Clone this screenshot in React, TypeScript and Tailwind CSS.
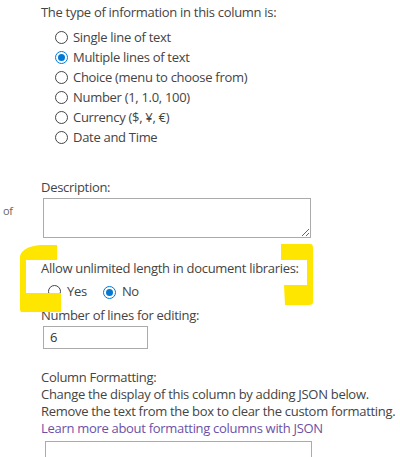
import React from "react";

function Radio({ checked }: { checked?: boolean }) {
  return checked ? (
    <span className="inline-flex h-[13px] w-[13px] shrink-0 items-center justify-center rounded-full border border-[#0078d4] bg-white">
      <span className="h-[7px] w-[7px] rounded-full bg-[#0078d4]" />
    </span>
  ) : (
    <span className="inline-block h-[13px] w-[13px] shrink-0 rounded-full border border-[#444] bg-white" />
  );
}

const types = [
  { label: "Single line of text" },
  { label: "Multiple lines of text", checked: true },
  { label: "Choice (menu to choose from)" },
  { label: "Number (1, 1.0, 100)" },
  { label: "Currency ($, ¥, €)" },
  { label: "Date and Time" },
];

export default function App() {
  return (
    <div
      className="relative h-[457px] w-[400px] overflow-hidden bg-white text-[13px] leading-[17px] tracking-[-0.3px] text-[#444]"
      style={{ fontFamily: "'Open Sans', 'Noto Sans', sans-serif" }}
    >
      <div className="flex flex-col pl-[41px] pt-[4px]">
        <div>The type of information in this column is:</div>
        <div className="mt-[8px] flex flex-col gap-[3px] pl-[14px]">
          {types.map((t) => (
            <label key={t.label} className="flex h-[17px] items-center gap-[5px]">
              <Radio checked={t.checked} />
              <span>{t.label}</span>
            </label>
          ))}
        </div>
      </div>

      <div className="mt-[33px] flex">
        <div className="w-[41px] shrink-0 pl-[3px] pt-[23px] text-[11px] text-[#666]">
          <span className="-ml-[9px] mr-[3px] text-[#0078d4]">e</span>of
        </div>
        <div className="flex flex-col">
          <div>Description:</div>
          <textarea className="mt-[2px] ml-[2px] h-[40px] w-[268px] resize border border-[#ababab] bg-white outline-none" />
          <div className="mt-[22px]">Allow unlimited length in document libraries:</div>
          <div className="mt-[6px] flex h-[17px] items-center pl-[7px]">
            <Radio />
            <span className="ml-[6px]">Yes</span>
            <span className="ml-[16px]">
              <Radio checked />
            </span>
            <span className="ml-[6px]">No</span>
          </div>
          <div className="mt-[7px]">Number of lines for editing:</div>
          <div className="ml-[2px] mt-[2px] flex h-[23px] w-[105px] items-center border border-[#ababab] pl-[6px] text-[#333]">
            6
          </div>
          <div className="mt-[20px]">Column Formatting:</div>
          <div className="whitespace-nowrap">Change the display of this column by adding JSON below.</div>
          <div className="whitespace-nowrap">Remove the text from the box to clear the custom formatting.</div>
          <div className="whitespace-nowrap text-[#6b50a8]">Learn more about formatting columns with JSON</div>
          <div className="ml-[4px] mt-[4px] h-[40px] w-[267px] border border-[#ababab]" />
        </div>
      </div>

      <svg className="pointer-events-none absolute left-0 top-0" width="400" height="457">
        <path
          d="M20 256 C22 249 30 246 40 245 L57 245 L57 260 L26 260 L26 293 L61 293 L61 312 L22 312 C20 312 20 310 20 305 Z"
          fill="#ffe600"
        />
        <path
          d="M281 244 L310 244 C313 244 313 246 313 250 L313 302 C313 304 312 305 309 305 L285 305 L284 285 L307 285 L307 260 L281 260 Z"
          fill="#ffe600"
        />
      </svg>
    </div>
  );
}
